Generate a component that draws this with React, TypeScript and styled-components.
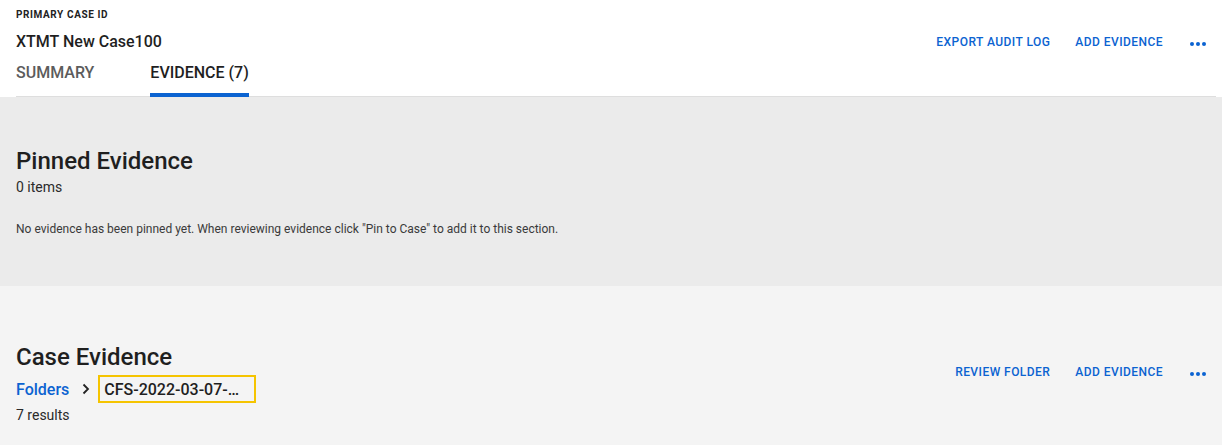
import React, { FC } from "react";
import styled, { createGlobalStyle } from "styled-components";

const GlobalStyle = createGlobalStyle`
  html, body {
    margin: 0;
    padding: 0;
    background: #ffffff;
    font-family: Roboto, "Liberation Sans", Arial, sans-serif;
    color: #1f1f1f;
  }
  * { box-sizing: border-box; }
`;

const BLUE = "#0b63d1";

const StyledPage = styled.div`
  width: 1222px;
  height: 445px;
  overflow: hidden;
  display: flex;
  flex-direction: column;
`;

const StyledHeader = styled.header`
  padding: 9px 6px 0 16px;
  background: #ffffff;
`;

const StyledEyebrow = styled.div`
  font-size: 10px;
  line-height: 12px;
  font-weight: 700;
  letter-spacing: 0.6px;
  text-transform: uppercase;
  color: #222;
`;

const StyledTitleRow = styled.div`
  display: flex;
  align-items: center;
  justify-content: space-between;
  margin-top: 10px;
  padding-right: 10px;
`;

const StyledCaseName = styled.h1`
  margin: 0;
  font-size: 16px;
  line-height: 22px;
  font-weight: 500;
`;

const StyledActions = styled.div<{ $offset?: number }>`
  display: flex;
  align-items: center;
  gap: 25px;
  margin-top: ${(p) => p.$offset ?? 0}px;
`;

const StyledAction = styled.button`
  border: 0;
  background: none;
  padding: 0;
  font-family: inherit;
  font-size: 12px;
  line-height: 16px;
  font-weight: 500;
  letter-spacing: 0.45px;
  text-transform: uppercase;
  color: ${BLUE};
  cursor: pointer;
`;

const StyledDots = styled.span`
  display: inline-flex;
  gap: 2px;
  margin-left: 2px;

  i {
    width: 4px;
    height: 4px;
    border-radius: 50%;
    background: ${BLUE};
  }
`;

const StyledTabs = styled.nav`
  display: flex;
  gap: 56px;
  margin-top: 10px;
  border-bottom: 1px solid #dedede;
`;

const StyledTab = styled.div<{ $active?: boolean }>`
  font-size: 16px;
  line-height: 20px;
  font-weight: 500;
  text-transform: uppercase;
  padding-bottom: 10px;
  color: ${(p) => (p.$active ? "#1f1f1f" : "#5c5c5c")};
  border-bottom: 4px solid ${(p) => (p.$active ? BLUE : "transparent")};
  margin-bottom: -1px;
`;

const StyledSection = styled.section<{ $bg: string }>`
  background: ${(p) => p.$bg};
  padding: 0 16px;
`;

const StyledPinned = styled(StyledSection)`
  padding-top: 48px;
  padding-bottom: 49px;
`;

const StyledCaseSection = styled(StyledSection)`
  flex: 1;
  padding-top: 55px;
  padding-right: 16px;
  display: flex;
  justify-content: space-between;
  align-items: flex-start;
`;

const StyledSectionTitle = styled.h2`
  margin: 0;
  font-size: 24px;
  line-height: 32px;
  font-weight: 500;
  color: #1f1f1f;
`;

const StyledCount = styled.div<{ $gap?: number }>`
  font-size: 14px;
  line-height: 20px;
  color: #2a2a2a;
  margin-top: ${(p) => p.$gap ?? 0}px;
`;

const StyledMessage = styled.p`
  margin: 24px 0 0;
  font-size: 12px;
  line-height: 16px;
  color: #3a3a3a;
`;

const StyledCrumbs = styled.div`
  display: flex;
  align-items: center;
  margin-top: 2px;
  height: 28px;
`;

const StyledCrumbLink = styled.a`
  font-size: 16px;
  font-weight: 500;
  color: ${BLUE};
  text-decoration: none;
`;

const StyledChevron = styled.svg`
  margin: 0 8px 0 13px;
`;

const StyledCurrent = styled.div`
  height: 28px;
  width: 158px;
  border: 2px solid #f5c400;
  padding: 0 4px;
  display: flex;
  align-items: center;
  font-size: 16px;
  font-weight: 500;
  color: #1f1f1f;
  white-space: nowrap;
  overflow: hidden;
`;

const Dots: FC = () => (
  <StyledDots>
    <i />
    <i />
    <i />
  </StyledDots>
);

const App: FC = () => {
  return (
    <StyledPage>
      <GlobalStyle />
      <StyledHeader>
        <StyledEyebrow>Primary Case ID</StyledEyebrow>
        <StyledTitleRow>
          <StyledCaseName>XTMT New Case100</StyledCaseName>
          <StyledActions>
            <StyledAction>Export Audit Log</StyledAction>
            <StyledAction>Add Evidence</StyledAction>
            <StyledAction aria-label="More">
              <Dots />
            </StyledAction>
          </StyledActions>
        </StyledTitleRow>
        <StyledTabs>
          <StyledTab>Summary</StyledTab>
          <StyledTab $active>Evidence (7)</StyledTab>
        </StyledTabs>
      </StyledHeader>

      <StyledPinned $bg="#ebebeb">
        <StyledSectionTitle>Pinned Evidence</StyledSectionTitle>
        <StyledCount>0 items</StyledCount>
        <StyledMessage>
          No evidence has been pinned yet. When reviewing evidence click "Pin to Case" to add it to
          this section.
        </StyledMessage>
      </StyledPinned>

      <StyledCaseSection $bg="#f4f4f4">
        <div>
          <StyledSectionTitle>Case Evidence</StyledSectionTitle>
          <StyledCrumbs>
            <StyledCrumbLink href="#">Folders</StyledCrumbLink>
            <StyledChevron width="8" height="12" viewBox="0 0 8 12">
              <path d="M1.5 1.5 6 6l-4.5 4.5" fill="none" stroke="#222" strokeWidth="1.8" />
            </StyledChevron>
            <StyledCurrent>CFS-2022-03-07-…</StyledCurrent>
          </StyledCrumbs>
          <StyledCount $gap={2}>7 results</StyledCount>
        </div>
        <StyledActions $offset={23}>
          <StyledAction>Review Folder</StyledAction>
          <StyledAction>Add Evidence</StyledAction>
          <StyledAction aria-label="More">
            <Dots />
          </StyledAction>
        </StyledActions>
      </StyledCaseSection>
    </StyledPage>
  );
};

export default App;
